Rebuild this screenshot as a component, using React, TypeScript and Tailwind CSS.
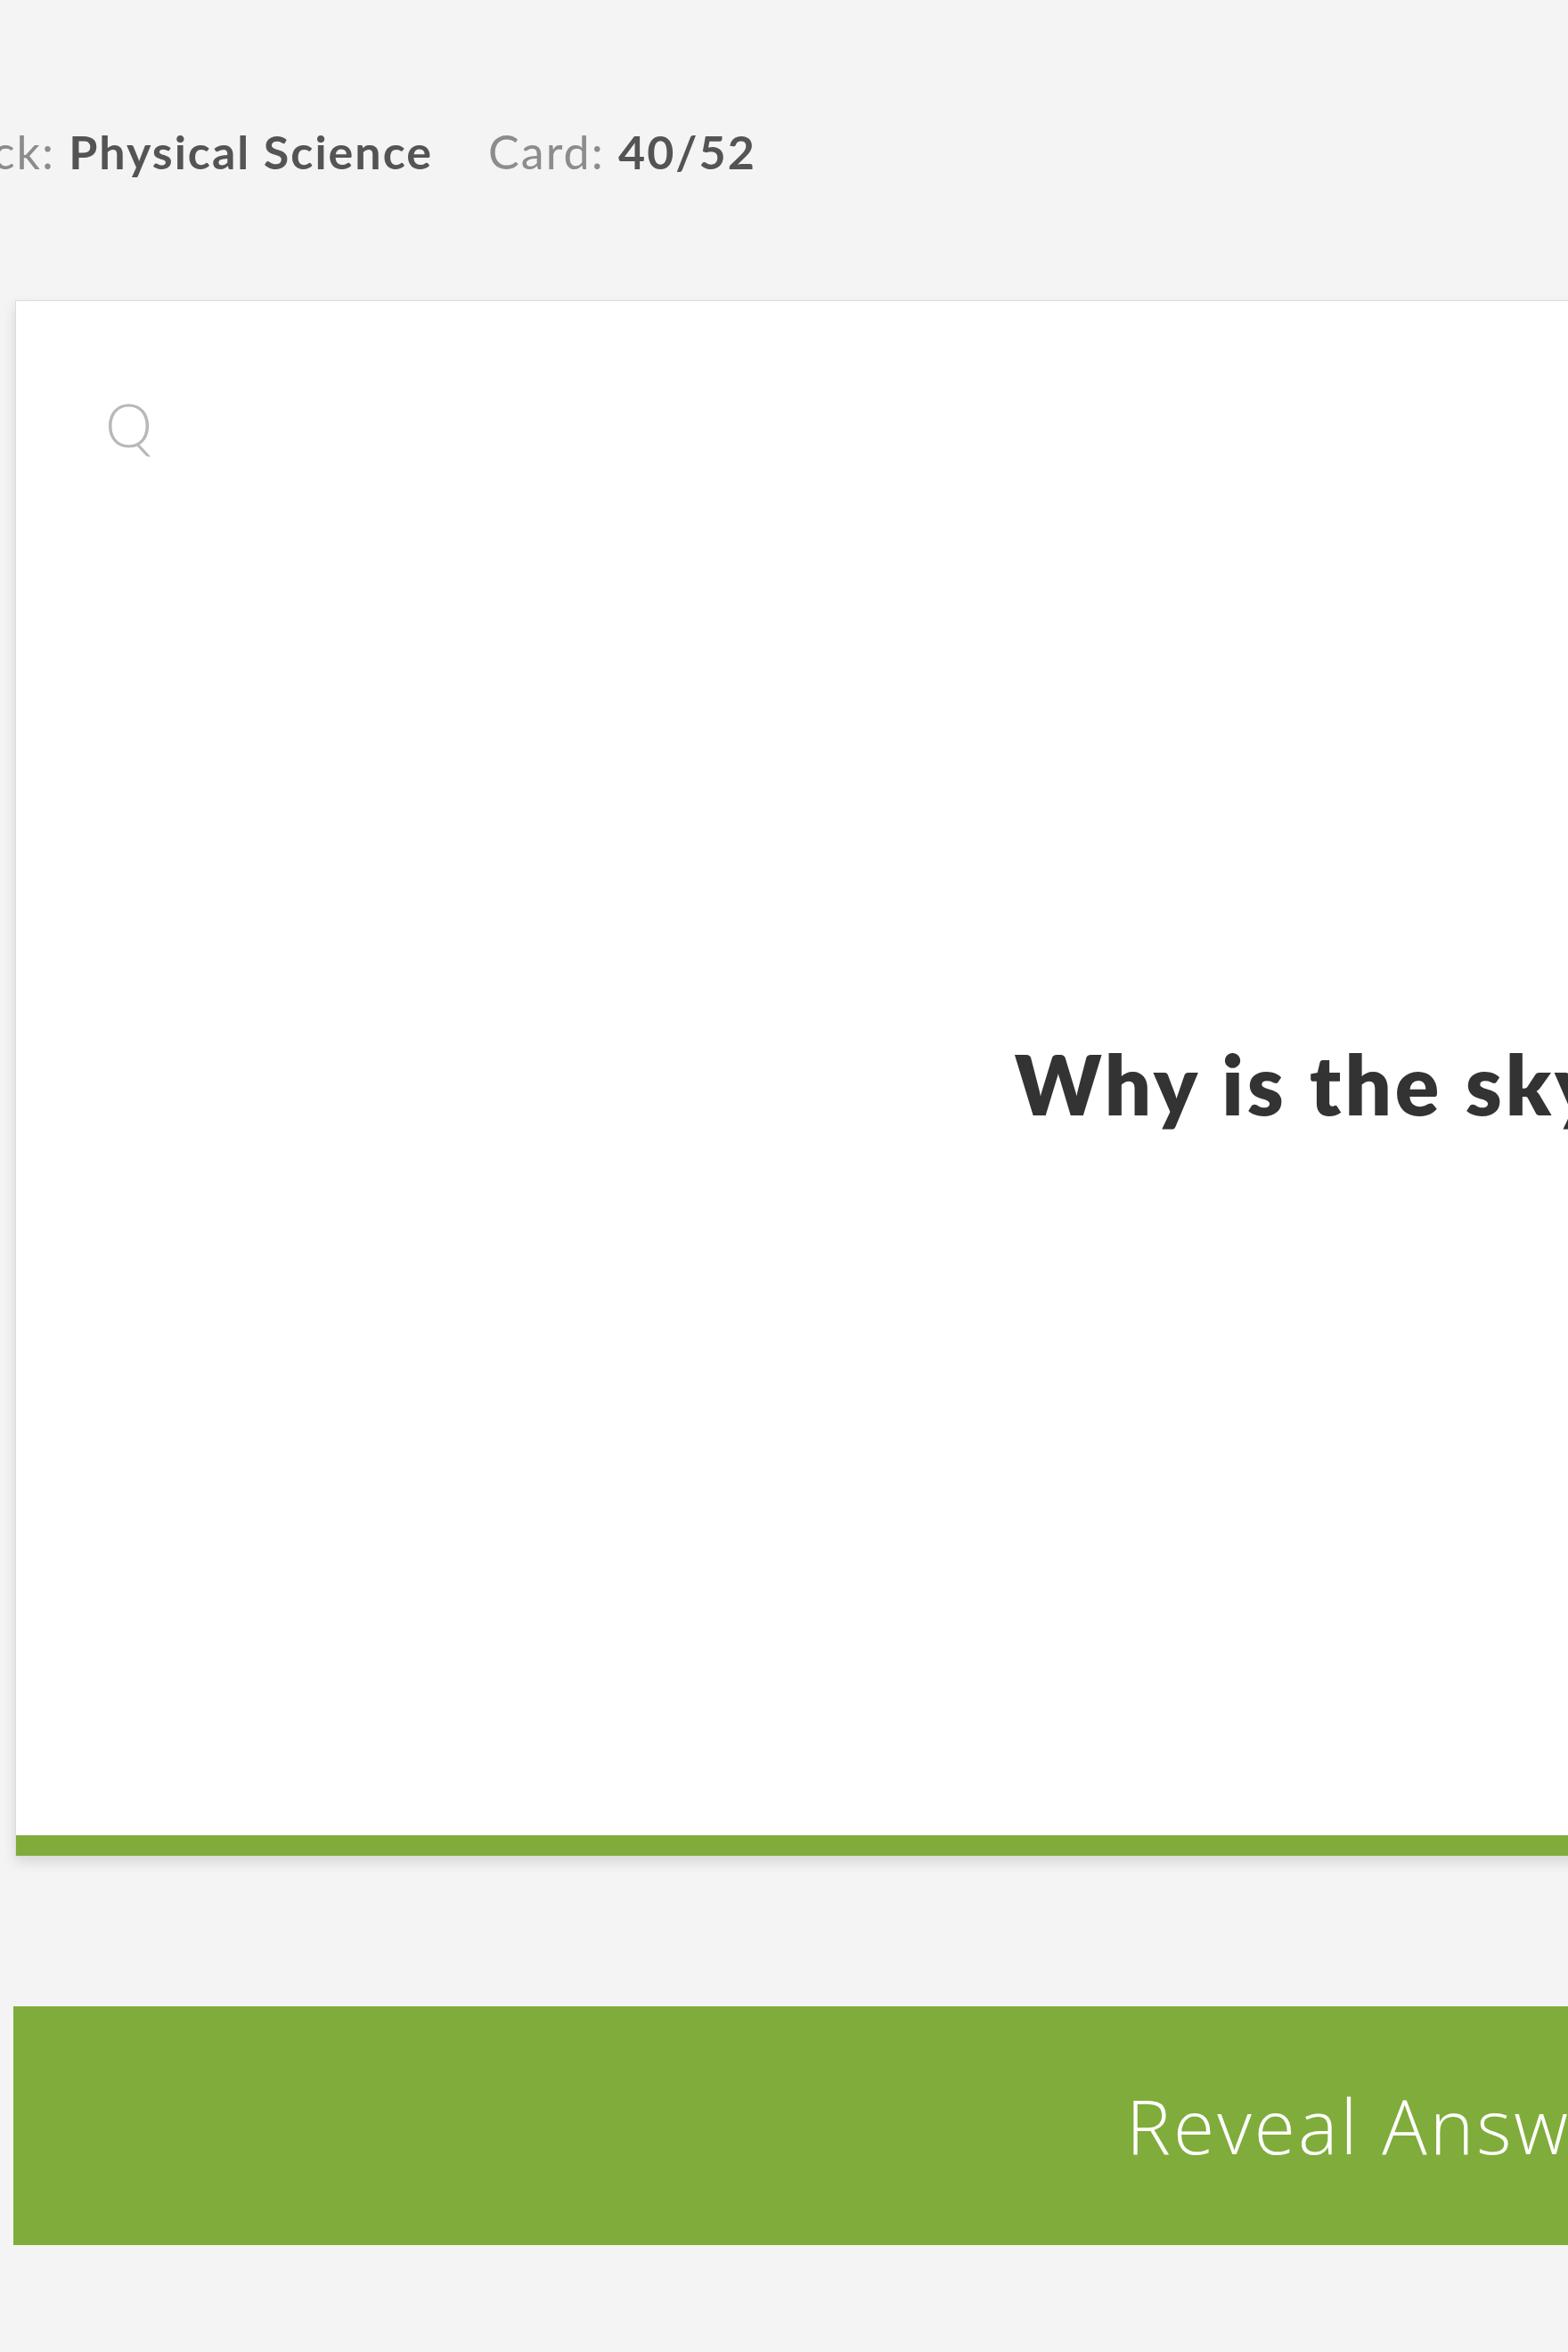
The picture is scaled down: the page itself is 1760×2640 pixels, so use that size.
export default function App() {
  const font = { fontFamily: 'Lato, "Open Sans", sans-serif' };

  return (
    <div
      className="w-[1760px] h-[2640px] overflow-hidden bg-[#f4f4f4]"
      style={font}
    >
      <div className="w-[3166px] ml-[17px]">
        {/* Deck + card counter */}
        <div className="flex items-baseline gap-[62px] -ml-[96px] pt-[144px] h-[337px] text-[52px] tracking-[2px] leading-none">
          <div className="whitespace-nowrap">
            <span className="text-[#8c8c8c]">Deck: </span>
            <span className="text-[#545454] font-bold">Physical Science</span>
          </div>
          <div className="whitespace-nowrap">
            <span className="text-[#8c8c8c]">Card: </span>
            <span className="text-[#545454] font-bold">40/52</span>
          </div>
        </div>

        {/* Flashcard */}
        <div className="bg-white border border-[#dcdcdc] shadow-[0_6px_14px_rgba(0,0,0,0.12)]">
          <div className="h-[1722px] flex flex-col px-[100px] pt-[105px]">
            <div className="text-[67px] font-light leading-none text-[#b8b8b8]">Q</div>
            <div className="flex-1 flex items-center justify-center pb-[136px]">
              <h1 className="text-[92px] font-extrabold tracking-[4px] text-[#333333] leading-none whitespace-nowrap">
                Why is the sky blue?
              </h1>
            </div>
          </div>
          <div className="h-[23px] bg-[#80ac3b]" />
        </div>

        {/* Reveal button */}
        <button
          className="mt-[168px] -ml-[2px] w-[3082px] h-[268px] bg-[#80ac3b] text-white text-[84px] tracking-[3px] font-light leading-none"
          style={{ fontFamily: '"Open Sans", Lato, sans-serif' }}
        >
          Reveal Answer
        </button>
      </div>
    </div>
  );
}
